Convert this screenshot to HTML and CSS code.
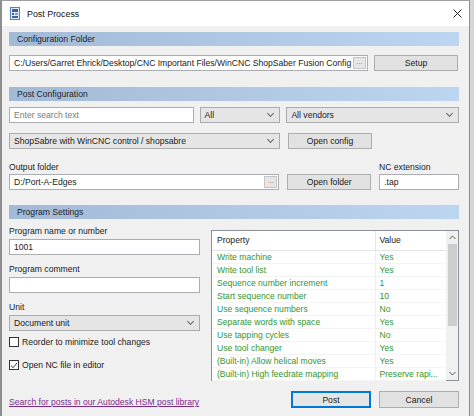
FILE: index.html
```html
<!DOCTYPE html>
<html lang="en">
<head>
    <meta charset="UTF-8">
    <title>Post Process</title>
    <link rel="stylesheet" href="styles.css">
</head>
<body>
    <div class="window">
        <!-- Title bar -->
        <div class="titlebar">
            <svg class="app-icon" width="10" height="13" viewBox="0 0 10 13">
                <rect x="0.5" y="0.5" width="9" height="12" fill="#e3edf9" stroke="#5a7fb3"/>
                <rect x="2" y="2" width="6" height="3" fill="#3d62a0"/>
                <rect x="2" y="6" width="2" height="2" fill="#3d62a0"/>
                <rect x="5" y="6" width="3" height="2" fill="#7f9cc9"/>
                <rect x="2" y="9" width="6" height="2" fill="#3d62a0"/>
            </svg>
            <span class="title">Post Process</span>
            <svg class="close" width="9" height="9" viewBox="0 0 9 9">
                <path d="M0.5 0.5 L8.5 8.5 M8.5 0.5 L0.5 8.5" stroke="#222" stroke-width="1"/>
            </svg>
        </div>

        <div class="content">
            <div class="section-head">Configuration Folder</div>
            <div class="row first-row">
                <div class="field path-field">
                    <span class="field-text">C:/Users/Garret Ehrick/Desktop/CNC Important Files/WinCNC ShopSaber Fusion Config</span>
                    <span class="browse">...</span>
                </div>
                <button class="btn setup">Setup</button>
            </div>

            <div class="section-head">Post Configuration</div>
            <div class="row search-row">
                <div class="field search-field"><span class="placeholder">Enter search text</span></div>
                <div class="select all-select"><span>All</span><i class="chev"></i></div>
                <div class="select vendor-select"><span>All vendors</span><i class="chev"></i></div>
            </div>
            <div class="row post-row">
                <div class="select post-select"><span>ShopSabre with WinCNC control / shopsabre</span><i class="chev"></i></div>
                <button class="btn mid-btn">Open config</button>
            </div>
            <div class="row label-row">
                <span class="output-label">Output folder</span>
                <span class="ext-label">NC extension</span>
            </div>
            <div class="row output-row">
                <div class="field output-field">
                    <span class="field-text">D:/Port-A-Edges</span>
                    <span class="browse">...</span>
                </div>
                <button class="btn mid-btn">Open folder</button>
                <div class="field ext-field"><span class="field-text">.tap</span></div>
            </div>

            <div class="section-head">Program Settings</div>
            <div class="settings">
                <div class="settings-left">
                    <div class="label">Program name or number</div>
                    <div class="field"><span class="field-text">1001</span></div>
                    <div class="label">Program comment</div>
                    <div class="field"></div>
                    <div class="label">Unit</div>
                    <div class="select"><span>Document unit</span><i class="chev"></i></div>
                    <label class="check first-check"><span class="box"></span>Reorder to minimize tool changes</label>
                    <label class="check"><span class="box checked">
                        <svg width="9" height="9" viewBox="0 0 9 9"><path d="M1 4.5 L3.5 7 L8 1.5" fill="none" stroke="#222" stroke-width="1"/></svg>
                    </span>Open NC file in editor</label>
                </div>

                <div class="props">
                    <div class="props-body">
                        <table>
                            <tr class="head"><td>Property</td><td>Value</td></tr>
                            <tr><td>Write machine</td><td>Yes</td></tr>
                            <tr><td>Write tool list</td><td>Yes</td></tr>
                            <tr><td>Sequence number increment</td><td>1</td></tr>
                            <tr><td>Start sequence number</td><td>10</td></tr>
                            <tr><td>Use sequence numbers</td><td>No</td></tr>
                            <tr><td>Separate words with space</td><td>Yes</td></tr>
                            <tr><td>Use tapping cycles</td><td>No</td></tr>
                            <tr><td>Use tool changer</td><td>Yes</td></tr>
                            <tr><td>(Built-in) Allow helical moves</td><td>Yes</td></tr>
                            <tr><td>(Built-in) High feedrate mapping</td><td>Preserve rapi...</td></tr>
                        </table>
                    </div>
                    <div class="scrollbar">
                        <svg class="arrow" width="7" height="5" viewBox="0 0 7 5"><path d="M0.5 4 L3.5 1 L6.5 4" fill="none" stroke="#555"/></svg>
                        <div class="thumb"></div>
                        <svg class="arrow down" width="7" height="5" viewBox="0 0 7 5"><path d="M0.5 1 L3.5 4 L6.5 1" fill="none" stroke="#555"/></svg>
                    </div>
                </div>
            </div>

            <div class="footer">
                <a href="#" class="library-link">Search for posts in our Autodesk HSM post library</a>
                <button class="btn default">Post</button>
                <button class="btn">Cancel</button>
            </div>
        </div>
    </div>
</body>
</html>
```

FILE: styles.css
```css
/* General Styles */
body {
    margin: 0;
    background-color: #d6d6d6;
    font-family: "Liberation Sans", Arial, sans-serif;
    font-size: 8.6px;
    color: #1a1a1a;
}

.window {
    width: 470px;
    height: 416px;
    box-sizing: border-box;
    border-left: 2px solid #8e8e8e;
    border-right: 1px solid #8e8e8e;
    border-top: 1px solid #a0a0a0;
    background-color: #f0f0f0;
}

/* Title bar */
.titlebar {
    height: 25px;
    background-color: #fff;
    display: flex;
    align-items: center;
    padding-left: 8px;
    padding-right: 7px;
}

.app-icon {
    margin-right: 7px;
}

.title {
    font-size: 8.9px;
    color: #111;
    flex: 1;
}

/* Content */
.content {
    padding: 0 10px 0 7px;
}

.section-head {
    height: 14px;
    line-height: 14px;
    padding-left: 8px;
    margin-top: 6px;
    background: linear-gradient(to right, #a3bad7, #bcd5f0);
    color: #1e1e1e;
}

.row {
    display: flex;
    align-items: center;
}

.first-row {
    margin-top: 9px;
}

.search-row {
    margin-top: 6px;
}

.post-row {
    margin-top: 10px;
}

.label-row {
    margin-top: 12px;
    height: 12px;
}

.output-row {
    margin-top: 1px;
}

.section-head + .first-row + .section-head {
    margin-top: 16px;
}

.output-row + .section-head {
    margin-top: 15px;
}

/* Inputs */
.field {
    height: 16px;
    box-sizing: border-box;
    border: 1px solid #abadb3;
    background-color: #fff;
    display: flex;
    align-items: center;
    padding-left: 4px;
    overflow: hidden;
}

.field-text {
    flex: 1;
    white-space: nowrap;
    overflow: hidden;
}

.placeholder {
    color: #7a7a7a;
}

.browse {
    width: 13px;
    height: 12px;
    box-sizing: border-box;
    margin-right: 1px;
    border: 1px solid #c4c4c4;
    background-color: #e6e6e6;
    color: #666;
    font-size: 7px;
    line-height: 8px;
    text-align: center;
    flex-shrink: 0;
}

.path-field {
    width: 359px;
}

.search-field {
    width: 185px;
}

.output-field {
    width: 271px;
}

.ext-field {
    width: 80px;
    margin-left: 8px;
}

/* Selects */
.select {
    height: 16px;
    box-sizing: border-box;
    border: 1px solid #acacac;
    background-color: #e5e5e5;
    display: flex;
    align-items: center;
    padding-left: 4px;
    padding-right: 6px;
}

.select span {
    flex: 1;
    white-space: nowrap;
}

.chev {
    width: 4px;
    height: 4px;
    border-right: 1px solid #666;
    border-bottom: 1px solid #666;
    transform: rotate(45deg);
    margin-top: -3px;
}

.all-select {
    width: 81px;
    margin-left: 6px;
}

.vendor-select {
    width: 173px;
    margin-left: 6px;
}

.post-select {
    width: 271px;
}

/* Buttons */
.btn {
    height: 16px;
    box-sizing: border-box;
    border: 1px solid #adadad;
    background-color: #e1e1e1;
    font-family: inherit;
    font-size: inherit;
    color: #1a1a1a;
    padding: 0;
}

.setup {
    width: 84px;
    margin-left: 6px;
}

.mid-btn {
    width: 84px;
    margin-left: 8px;
}

.output-label {
    width: 370px;
}

/* Program settings */
.settings {
    display: grid;
    grid-template-columns: 191px 248px;
    column-gap: 11px;
    height: 162px;
}

.settings-left .label {
    height: 12px;
    line-height: 12px;
    margin-top: 8px;
    margin-bottom: 2px;
}

.settings-left .label:first-child {
    margin-top: 6px;
}

.check {
    display: flex;
    align-items: center;
    height: 12px;
    margin-top: 11px;
}

.first-check {
    margin-top: 5px;
}

.box {
    width: 10px;
    height: 10px;
    box-sizing: border-box;
    border: 1px solid #333;
    background-color: #fff;
    margin-right: 3px;
    display: flex;
    align-items: center;
    justify-content: center;
}

/* Property table */
.props {
    margin-top: 11px;
    height: 151px;
    box-sizing: border-box;
    border: 1px solid #8c9098;
    background-color: #fff;
    display: flex;
}

.props-body {
    flex: 1;
}

table {
    width: 100%;
    border-collapse: collapse;
    color: #33962f;
}

td {
    height: 13px;
    padding: 0 0 0 5px;
    border-bottom: 1px solid #f4f4f4;
    box-sizing: border-box;
    white-space: nowrap;
}

td:first-child {
    width: 163px;
    border-right: 1px solid #f0f0f0;
}

td + td {
    padding-left: 4px;
}

tr.head td {
    height: 19px;
    color: #1a1a1a;
    border-bottom: 1px solid #e4e4e4;
    border-right-color: #e4e4e4;
}

.scrollbar {
    width: 12px;
    background-color: #f0f0f0;
    display: flex;
    flex-direction: column;
    align-items: center;
}

.arrow {
    margin-top: 4px;
    margin-bottom: 4px;
}

.arrow.down {
    margin-top: auto;
    margin-bottom: 4px;
}

.thumb {
    width: 9px;
    height: 82px;
    background-color: #cdcdcd;
}

/* Footer */
.footer {
    display: flex;
    align-items: center;
    margin-top: 10px;
    height: 17px;
}

.library-link {
    color: #7d2a8d;
    flex: 1;
    margin-top: 5px;
}

.footer .btn {
    width: 80px;
    height: 17px;
    margin-left: 8px;
}

.footer .btn.default {
    border: 1px solid #0078d7;
    box-shadow: inset 0 0 0 1px #0078d7;
    background-color: #e5e5e5;
}
```
